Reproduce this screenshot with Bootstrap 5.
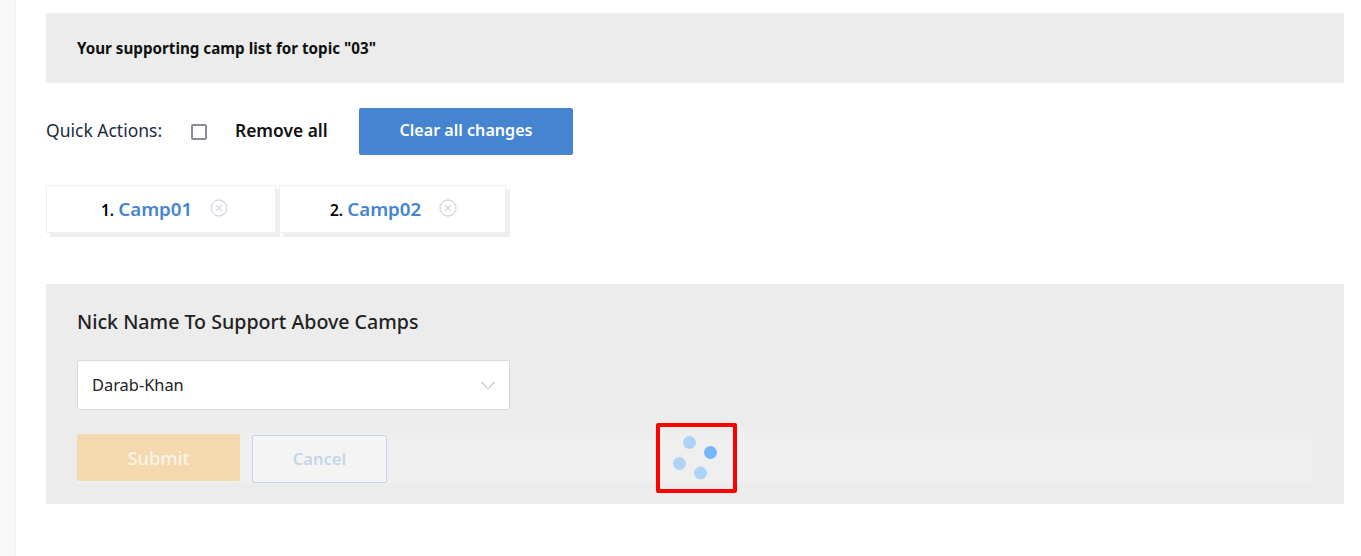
<!DOCTYPE html>
<html lang="en">
<head>
<meta charset="utf-8">
<title>Supporting camps</title>
<link href="https://cdn.jsdelivr.net/npm/bootstrap@5.3.0/dist/css/bootstrap.min.css" rel="stylesheet">
<style>
html, body { height: 556px; overflow: hidden; }
body { font-family: "Noto Sans", "Liberation Sans", sans-serif; color: #1c1c1c; background: #fff; }
.shell { height: 556px; }
.side-strip { width: 16px; flex: none; background: #f8f8f8; border-right: 1px solid #f0f0f0; }
.main-col { width: 1328px; flex: none; padding: 13px 0 0 30px; }
.list-head { height: 70px; background: #ececec; padding-left: 31px; font-size: 15.2px; font-weight: 700; color: #111; }
.quick-row { height: 47px; margin-top: 25px; }
.quick-label { width: 145px; padding-bottom: 2px; color: #1d2b3f; font-size: 17.5px; }
.check-box { width: 16px; height: 16px; border: 2px solid #8b8b9c; border-radius: 2px; }
.remove-label { margin-left: 28px; width: 124px; padding-bottom: 2px; font-weight: 600; font-size: 17.4px; color: #111; }
.clear-btn { width: 214px; height: 47px; padding-bottom: 2px !important; background: #4484d0; border: 0; border-radius: 2px; color: #fff; font-weight: 600; font-size: 16.1px; }
.tab-row { margin-top: 30px; gap: 3px; }
.camp-tab { height: 48px; background: #fff; border: 1px solid #f0f0f0; box-shadow: 4px 4px 0 #efefef; gap: 18px; }
.tab-one { width: 230px; padding-left: 54px; }
.tab-two { width: 227px; padding-left: 50px; }
.camp-num { font-size: 15.5px; font-weight: 600; color: #000; }
.camp-link { color: #4484d0; font-size: 18.7px; font-weight: 600; text-decoration: none; }
.x-icon { width: 18px; height: 18px; margin-top: -3px; }
.nick-panel { height: 220px; margin-top: 51px; background: #ececec; padding: 24px 31px 0; }
.nick-title { font-size: 19.6px; font-weight: 500; line-height: 27px; margin: 0; color: #222; }
.nick-select { width: 433px; height: 50px; margin-top: 25px; padding: 0 14px 0 14px; background: #fff; border: 1px solid #d9d9d9; border-radius: 2px; font-size: 16.4px; color: #222; }
.action-band { position: relative; height: 50px; margin-top: 23px; background: #efefef; width: 1236px; gap: 12px; }
.submit-btn { width: 163px; height: 47px; margin-top: 1px; background: #f4d9ae; border: 0; border-radius: 2px; color: #fbf4e8; font-size: 18.3px; font-weight: 500; }
.cancel-btn { width: 135px; height: 48px; margin-top: 2px; background: #f4f4f4; border: 1px solid #c5d5ef; border-radius: 2px; color: #c4d5ea; font-size: 16.5px; font-weight: 600; }
.spin-box { position: absolute; left: 579px; top: -10px; width: 81px; height: 70px; border: 4px solid #f00; border-radius: 2px; }
</style>
</head>
<body>
<div class="shell d-flex">
  <div class="side-strip"></div>
  <div class="main-col">
    <div class="list-head d-flex align-items-center">Your supporting camp list for topic "03"</div>

    <div class="quick-row d-flex align-items-center">
      <span class="quick-label">Quick Actions:</span>
      <span class="check-box"></span>
      <span class="remove-label">Remove all</span>
      <button type="button" class="btn clear-btn p-0">Clear all changes</button>
    </div>

    <div class="tab-row d-flex">
      <div class="camp-tab tab-one d-flex align-items-center">
        <span><span class="camp-num">1.</span> <a class="camp-link" href="#">Camp01</a></span>
        <svg class="x-icon" viewBox="0 0 18 18" fill="none" stroke="#d5d8e0" stroke-width="1.3"><circle cx="9" cy="9" r="8"/><path d="M6.2 6.2l5.6 5.6M11.8 6.2l-5.6 5.6"/></svg>
      </div>
      <div class="camp-tab tab-two d-flex align-items-center">
        <span><span class="camp-num">2.</span> <a class="camp-link" href="#">Camp02</a></span>
        <svg class="x-icon" viewBox="0 0 18 18" fill="none" stroke="#d5d8e0" stroke-width="1.3"><circle cx="9" cy="9" r="8"/><path d="M6.2 6.2l5.6 5.6M11.8 6.2l-5.6 5.6"/></svg>
      </div>
    </div>

    <div class="nick-panel">
      <h2 class="nick-title">Nick Name To Support Above Camps</h2>
      <div class="nick-select d-flex align-items-center justify-content-between">
        <span>Darab-Khan</span>
        <svg width="14" height="9" viewBox="0 0 14 9" fill="none" stroke="#bfbfbf" stroke-width="1.1"><path d="M.5.8L7 8l6.5-7.2"/></svg>
      </div>
      <div class="action-band d-flex align-items-start">
        <button type="button" class="btn submit-btn p-0">Submit</button>
        <button type="button" class="btn cancel-btn p-0">Cancel</button>
        <div class="spin-box">
          <svg class="d-block" width="73" height="62" viewBox="0 0 73 62">
            <circle cx="29.5" cy="15.5" r="6.5" fill="#aed3f7"/>
            <circle cx="50.5" cy="25.5" r="6.5" fill="#74b6fb"/>
            <circle cx="19.5" cy="36.5" r="6.5" fill="#aed3f7"/>
            <circle cx="40.5" cy="46" r="6.5" fill="#aed3f7"/>
          </svg>
        </div>
      </div>
    </div>
  </div>
</div>
<script src="https://cdn.jsdelivr.net/npm/bootstrap@5.3.0/dist/js/bootstrap.bundle.min.js"></script>
</body>
</html>
